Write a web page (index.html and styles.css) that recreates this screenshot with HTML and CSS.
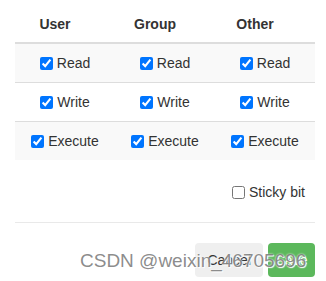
FILE: index.html
```html
<!DOCTYPE html>
<html lang="en">
<head>
    <meta charset="UTF-8">
    <meta name="viewport" content="width=device-width, initial-scale=1.0">
    <title>Permissions</title>
    <link rel="stylesheet" href="styles.css">
</head>
<body>
    <div class="modal">
        <div class="modal-body">
            <table class="perm-table">
                <thead>
                    <tr>
                        <th>User</th>
                        <th>Group</th>
                        <th>Other</th>
                    </tr>
                </thead>
                <tbody>
                    <tr>
                        <td><label class="check"><input type="checkbox" checked>Read</label></td>
                        <td><label class="check"><input type="checkbox" checked>Read</label></td>
                        <td><label class="check"><input type="checkbox" checked>Read</label></td>
                    </tr>
                    <tr>
                        <td><label class="check"><input type="checkbox" checked>Write</label></td>
                        <td><label class="check"><input type="checkbox" checked>Write</label></td>
                        <td><label class="check"><input type="checkbox" checked>Write</label></td>
                    </tr>
                    <tr>
                        <td><label class="check"><input type="checkbox" checked>Execute</label></td>
                        <td><label class="check"><input type="checkbox" checked>Execute</label></td>
                        <td><label class="check"><input type="checkbox" checked>Execute</label></td>
                    </tr>
                </tbody>
            </table>

            <div class="sticky">
                <label class="check"><input type="checkbox">Sticky bit</label>
            </div>
        </div>

        <div class="modal-footer">
            <button class="btn btn-default">Cancel</button>
            <button class="btn btn-success">Save</button>
        </div>
    </div>

    <div class="watermark">CSDN @weixin_46705696</div>
</body>
</html>
```

FILE: styles.css
```css
* {
    box-sizing: border-box;
}

body {
    margin: 0;
    font-family: 'Liberation Sans', Arial, sans-serif;
    font-size: 14px;
    line-height: 20px;
    color: #333;
    background-color: #fff;
}

.modal {
    width: 300px;
    margin-left: 15px;
}

.perm-table {
    width: 100%;
    table-layout: fixed;
    border-collapse: separate;
    border-spacing: 0;
    margin-top: 6px;
}

.perm-table th {
    padding: 8px 20px 8px 0;
    text-align: center;
    font-weight: bold;
    border-bottom: 2px solid #ddd;
}

.perm-table td {
    padding: 9px 0;
    text-align: center;
}

.perm-table tbody tr + tr td {
    border-top: 1px solid #ddd;
}

.perm-table tbody tr:nth-child(odd) td {
    background-color: #f9f9f9;
}

.check {
    display: inline-flex;
    align-items: center;
    gap: 4px;
    height: 20px;
    vertical-align: top;
}

.check input {
    margin: 0;
    width: 13px;
    height: 13px;
}

.sticky {
    display: flex;
    justify-content: flex-end;
    margin-top: 22px;
    padding-right: 10px;
}

.modal-footer {
    margin-top: 20px;
    padding-top: 20px;
    border-top: 1px solid #e9e9e9;
    display: flex;
    justify-content: flex-end;
    gap: 5px;
}

.btn {
    height: 34px;
    padding: 0 12px;
    font-family: inherit;
    font-size: 14px;
    border: none;
    border-radius: 4px;
    cursor: pointer;
}

.btn-default {
    background-color: #efefef;
    color: #333;
}

.btn-success {
    width: 47px;
    padding: 0;
    background-color: #5cb85c;
    color: #fff;
}

.watermark {
    position: absolute;
    left: 80px;
    top: 249px;
    font-size: 19px;
    line-height: 24px;
    color: rgba(110, 110, 110, 0.8);
    text-shadow: 0 0 2px #fff, 1px 1px 1px #fff;
    white-space: nowrap;
    pointer-events: none;
}
```
